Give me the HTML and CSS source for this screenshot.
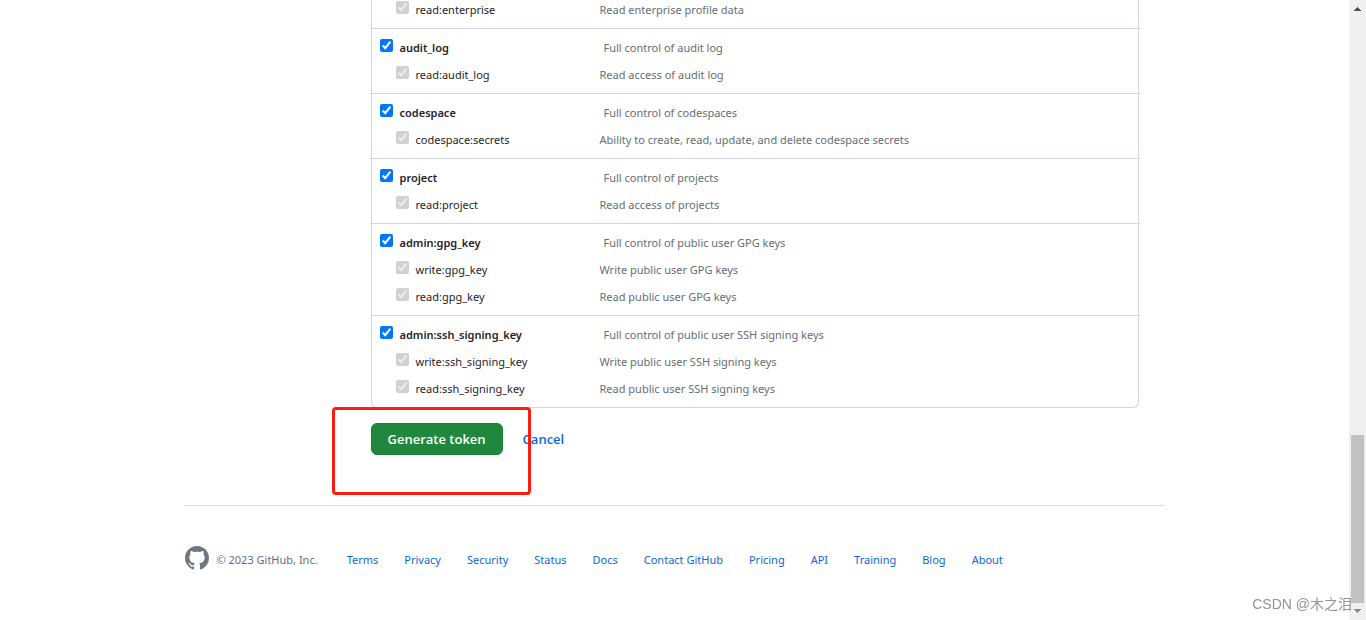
FILE: index.html
```html
<!DOCTYPE html>
<html lang="en">
<head>
    <meta charset="UTF-8">
    <meta name="viewport" content="width=device-width, initial-scale=1.0">
    <title>New personal access token</title>
    <link rel="stylesheet" href="styles.css">
</head>
<body>

    <div class="page">
        <main class="settings">
            <form class="token-form">
                <ul class="scopes">
                    <li class="scope-group">
                        <div class="scope child">
                            <label for="readEnterprise"><input type="checkbox" id="readEnterprise" checked disabled>read:enterprise</label>
                            <span class="description">Read enterprise profile data</span>
                        </div>
                    </li>
                    <li class="scope-group">
                        <div class="scope parent">
                            <label for="auditLog"><input type="checkbox" id="auditLog" checked>audit_log</label>
                            <span class="description">Full control of audit log</span>
                        </div>
                        <div class="scope child">
                            <label for="readAuditLog"><input type="checkbox" id="readAuditLog" checked disabled>read:audit_log</label>
                            <span class="description">Read access of audit log</span>
                        </div>
                    </li>
                    <li class="scope-group">
                        <div class="scope parent">
                            <label for="codespace"><input type="checkbox" id="codespace" checked>codespace</label>
                            <span class="description">Full control of codespaces</span>
                        </div>
                        <div class="scope child">
                            <label for="codespaceSecrets"><input type="checkbox" id="codespaceSecrets" checked disabled>codespace:secrets</label>
                            <span class="description">Ability to create, read, update, and delete codespace secrets</span>
                        </div>
                    </li>
                    <li class="scope-group">
                        <div class="scope parent">
                            <label for="project"><input type="checkbox" id="project" checked>project</label>
                            <span class="description">Full control of projects</span>
                        </div>
                        <div class="scope child">
                            <label for="readProject"><input type="checkbox" id="readProject" checked disabled>read:project</label>
                            <span class="description">Read access of projects</span>
                        </div>
                    </li>
                    <li class="scope-group">
                        <div class="scope parent">
                            <label for="adminGpg"><input type="checkbox" id="adminGpg" checked>admin:gpg_key</label>
                            <span class="description">Full control of public user GPG keys</span>
                        </div>
                        <div class="scope child">
                            <label for="writeGpg"><input type="checkbox" id="writeGpg" checked disabled>write:gpg_key</label>
                            <span class="description">Write public user GPG keys</span>
                        </div>
                        <div class="scope child">
                            <label for="readGpg"><input type="checkbox" id="readGpg" checked disabled>read:gpg_key</label>
                            <span class="description">Read public user GPG keys</span>
                        </div>
                    </li>
                    <li class="scope-group">
                        <div class="scope parent">
                            <label for="adminSsh"><input type="checkbox" id="adminSsh" checked>admin:ssh_signing_key</label>
                            <span class="description">Full control of public user SSH signing keys</span>
                        </div>
                        <div class="scope child">
                            <label for="writeSsh"><input type="checkbox" id="writeSsh" checked disabled>write:ssh_signing_key</label>
                            <span class="description">Write public user SSH signing keys</span>
                        </div>
                        <div class="scope child">
                            <label for="readSsh"><input type="checkbox" id="readSsh" checked disabled>read:ssh_signing_key</label>
                            <span class="description">Read public user SSH signing keys</span>
                        </div>
                    </li>
                </ul>

                <div class="actions">
                    <button type="submit" class="btn-primary">Generate token</button>
                    <a href="#" class="cancel">Cancel</a>
                    <div class="highlight"></div>
                </div>
            </form>
        </main>

        <footer class="footer">
            <svg class="logo" viewBox="0 0 16 16" width="24" height="24" aria-hidden="true">
                <path d="M8 0C3.58 0 0 3.58 0 8c0 3.54 2.29 6.53 5.47 7.59.4.07.55-.17.55-.38 0-.19-.01-.82-.01-1.49-2.01.37-2.53-.49-2.69-.94-.09-.23-.48-.94-.82-1.13-.28-.15-.68-.52-.01-.53.63-.01 1.08.58 1.23.82.72 1.21 1.87.87 2.33.66.07-.52.28-.87.51-1.07-1.78-.2-3.64-.89-3.64-3.95 0-.87.31-1.59.82-2.15-.08-.2-.36-1.02.08-2.12 0 0 .67-.21 2.2.82.64-.18 1.32-.27 2-.27.68 0 1.36.09 2 .27 1.53-1.04 2.2-.82 2.2-.82.44 1.1.16 1.92.08 2.12.51.56.82 1.27.82 2.15 0 3.07-1.87 3.75-3.65 3.95.29.25.54.73.54 1.48 0 1.07-.01 1.93-.01 2.2 0 .21.15.46.55.38A8.01 8.01 0 0 0 16 8c0-4.42-3.58-8-8-8Z"/>
            </svg>
            <span class="copyright">© 2023 GitHub, Inc.</span>
            <nav class="footer-links">
                <a href="#">Terms</a>
                <a href="#">Privacy</a>
                <a href="#">Security</a>
                <a href="#">Status</a>
                <a href="#">Docs</a>
                <a href="#">Contact GitHub</a>
                <a href="#">Pricing</a>
                <a href="#">API</a>
                <a href="#">Training</a>
                <a href="#">Blog</a>
                <a href="#">About</a>
            </nav>
        </footer>
    </div>

    <div class="scrollbar">
        <svg viewBox="0 0 17 17" width="17" height="17"><path d="M5 11h7v-1h-1V9h-1V8H9V7H8v1H7v1H6v1H5z" fill="#505050"/></svg>
        <div class="thumb"></div>
        <svg viewBox="0 0 17 17" width="17" height="17"><path d="M5 6h7v1h-1v1h-1v1H9v1H8V9H7V8H6V7H5z" fill="#8b8b8b"/></svg>
    </div>

    <div class="watermark">CSDN @木之泪</div>

</body>
</html>
```
FILE: styles.css
```css
* {
    box-sizing: border-box;
}

body {
    margin: 0;
    display: flex;
    height: 100vh;
    overflow: hidden;
    background-color: #fff;
    color: #1f2328;
    font-family: "Segoe UI", "Noto Sans", sans-serif;
    font-size: 11px;
    line-height: 27px;
}

a {
    color: #0969da;
    text-decoration: none;
}

.page {
    flex: 1;
}

.settings {
    max-width: 980px;
    margin: 0 auto;
    padding: 0 26px 0 186px;
}

/* list is scrolled, so its first row is cut by the top edge */
.scopes {
    list-style: none;
    margin: -4px 0 0;
    padding: 0;
    border: 1px solid #d0d7de;
    border-top: none;
    border-radius: 0 0 6px 6px;
}

.scope-group {
    margin: 0 -2px;
    padding: 5px 10px;
    border-top: 1px solid #d0d7de;
}

.scope-group:first-child {
    padding-top: 0;
    border-top: none;
}

.scope {
    display: grid;
    grid-template-columns: 220px 1fr;
}

.scope label {
    display: flex;
    align-items: flex-start;
}

.scope input {
    width: 13px;
    height: 13px;
    margin: 5px 7px 0 0;
}

.parent label {
    font-weight: 600;
}

.parent .description {
    padding-left: 4px;
}

.child label {
    padding-left: 16px;
}

.description {
    color: #656d76;
}

.actions {
    position: relative;
    display: flex;
    align-items: center;
    gap: 20px;
    margin-top: 15px;
    font-family: "Segoe UI", "Open Sans", sans-serif;
    font-size: 13px;
    font-weight: 600;
}

.btn-primary {
    height: 32px;
    padding: 0 16px;
    border: 1px solid #1a7f37;
    border-radius: 6px;
    background-color: #1f883d;
    color: #fff;
    font: inherit;
    cursor: pointer;
}

.highlight {
    position: absolute;
    top: -16px;
    left: -39px;
    width: 199px;
    height: 88px;
    border: 3px solid #fc1d10;
    border-radius: 4px;
    pointer-events: none;
}

.footer {
    display: flex;
    align-items: flex-start;
    max-width: 980px;
    margin: 50px auto 0;
    padding-top: 40px;
    border-top: 1px solid #d8dee4;
    color: #656d76;
}

.logo {
    fill: #6e7781;
    margin-right: 8px;
}

.footer-links {
    display: flex;
    gap: 26px;
    margin-left: 29px;
}

.scrollbar {
    display: flex;
    flex-direction: column;
    width: 17px;
    background-color: #f0f0f0;
}

.thumb {
    height: 168px;
    margin: auto 2px 0;
    background-color: #c1c1c1;
}

.watermark {
    position: fixed;
    right: 14px;
    bottom: 6px;
    color: #949494;
    font-family: "Liberation Sans", "Noto Sans CJK SC", sans-serif;
    font-size: 14px;
    line-height: 20px;
}
```
